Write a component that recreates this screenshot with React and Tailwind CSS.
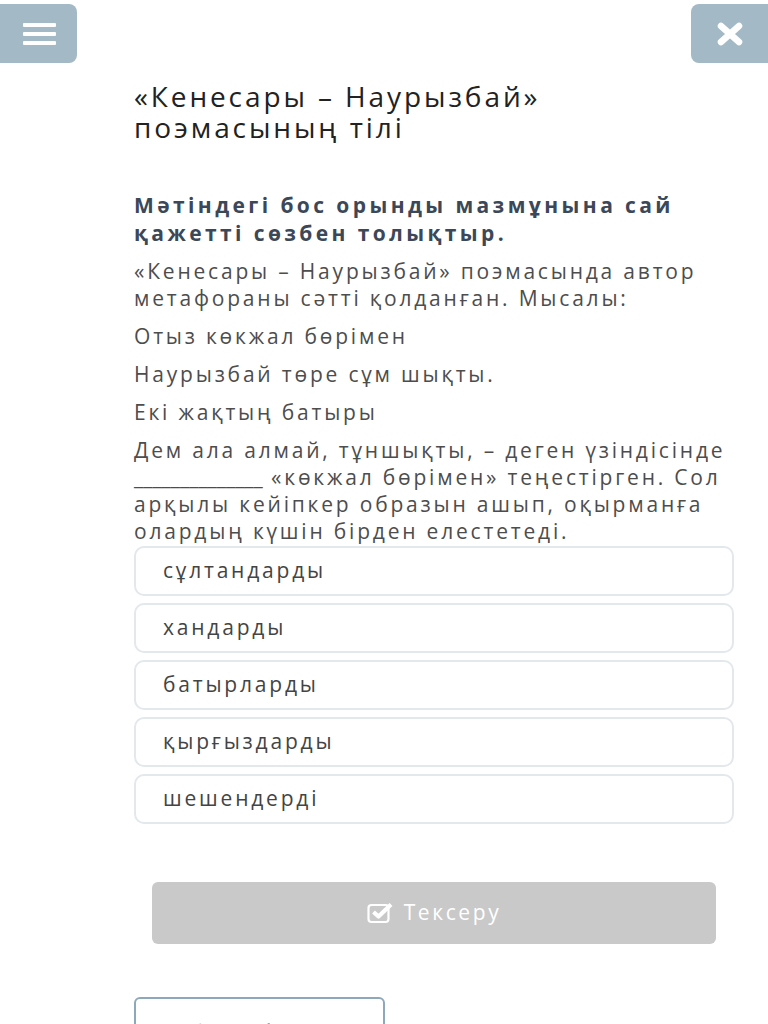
import React from 'react';
import { ChevronLeft } from 'lucide-react';

const options = ['сұлтандарды', 'хандарды', 'батырларды', 'қырғыздарды', 'шешендерді'];

const App = () => {
  return (
    <div className="min-h-screen bg-white font-['Open_Sans',sans-serif] relative overflow-hidden">
      <div className="flex justify-between pt-[4px]">
        <button className="w-[77px] h-[59px] rounded-r-[8px] bg-[#a4b9c6] flex items-center justify-center">
          <svg width="36" height="26" viewBox="0 0 36 26">
            <rect x="2" y="2" width="33" height="4" rx="1" fill="#fff" />
            <rect x="2" y="11" width="33" height="4" rx="1" fill="#fff" />
            <rect x="2" y="20" width="33" height="4" rx="1" fill="#fff" />
          </svg>
        </button>
        <button className="w-[77px] h-[59px] rounded-l-[8px] bg-[#a4b9c6] flex items-center justify-center">
          <svg width="30" height="26" viewBox="0 0 30 26">
            <path d="M6 5 L24 21 M24 5 L6 21" stroke="#fff" strokeWidth="6.5" strokeLinecap="round" />
          </svg>
        </button>
      </div>

      <div className="w-[600px] ml-[134px] tracking-[2.8px]">
        <h1 className="mt-[18px] text-[28px] leading-[31px] text-[#222] tracking-[2.9px]">
          «Кенесары – Наурызбай»<br />поэмасының тілі
        </h1>

        <h2 className="mt-[48px] text-[21px] leading-[28px] font-bold text-[#3c4858] tracking-[3.4px]">
          Мәтіндегі бос орынды мазмұнына сай қажетті сөзбен толықтыр.
        </h2>

        <div className="mt-[11px] text-[21px] leading-[27px] text-[#4d4d4d] flex flex-col gap-[11px]">
          <p>«Кенесары – Наурызбай» поэмасында автор метафораны сәтті қолданған. Мысалы:</p>
          <p>Отыз көкжал бөрімен</p>
          <p>Наурызбай төре сұм шықты.</p>
          <p>Екі жақтың батыры</p>
          <p>Дем ала алмай, тұншықты, – деген үзіндісінде <span className="tracking-normal">______________</span> «көкжал бөрімен» теңестірген. Сол арқылы кейіпкер образын ашып, оқырманға олардың күшін бірден елестетеді.</p>
        </div>

        <div className="mt-[1px] flex flex-col gap-[7px]">
          {options.map((o) => (
            <div key={o} className="h-[50px] border-2 border-[#e3e8ec] rounded-[10px] flex items-center pl-[27px] text-[21px] text-[#444]">
              {o}
            </div>
          ))}
        </div>

        <div className="mt-[58px] px-[18px]">
          <button className="w-full h-[62px] bg-[#c9c9c9] rounded-[6px] flex items-center justify-center gap-[10px] text-white text-[21px] tracking-[2.6px]">
            <svg width="27" height="22" viewBox="0 0 27 22">
              <rect x="1.5" y="3" width="20" height="17" rx="3" fill="none" stroke="#fff" strokeWidth="2.2" />
              <path d="M6.5 10 L11.5 14.5 L24 2.5" fill="none" stroke="#fff" strokeWidth="4.2" strokeLinejoin="round" />
            </svg>
            Тексеру
          </button>
        </div>

        <button className="mt-[53px] w-[251px] h-[70px] border-2 border-[#8ea8bb] rounded-[6px] flex items-center justify-center gap-[52px] text-[#8ea8bb] text-[21px]">
          <ChevronLeft size={26} strokeWidth={3.5} />
          <span>Артқа</span>
        </button>
      </div>
    </div>
  );
};

export default App;
